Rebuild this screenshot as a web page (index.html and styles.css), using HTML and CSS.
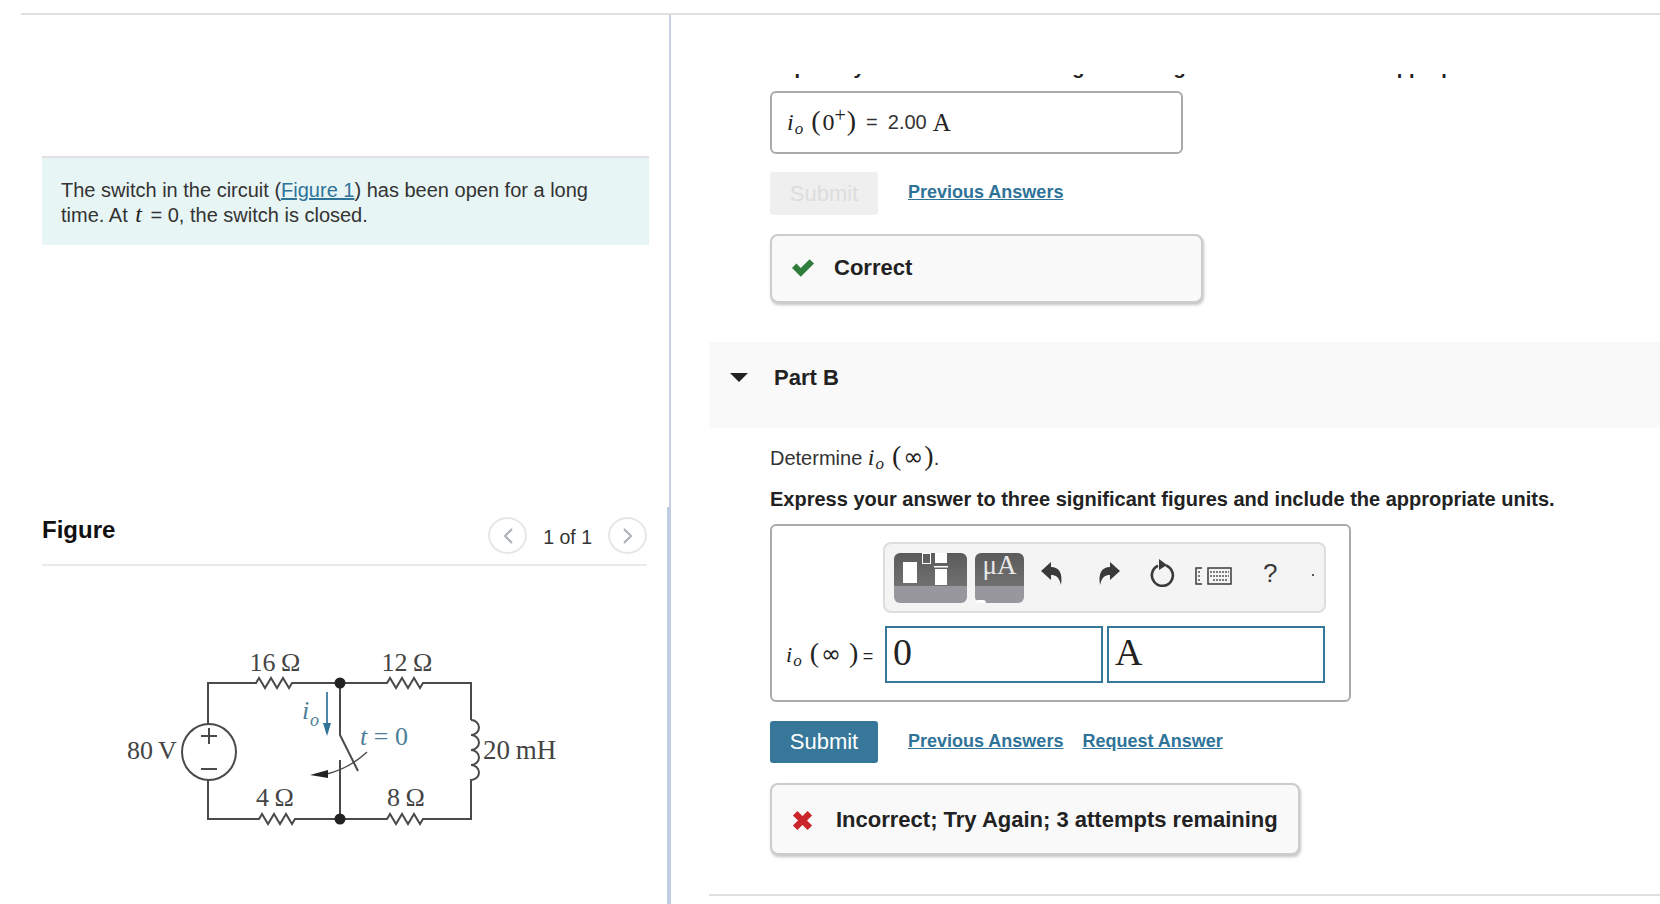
FILE: index.html
```html
<!DOCTYPE html>
<html lang="en">
<head>
  <meta charset="UTF-8" />
  <title>Part B</title>
  <link rel="stylesheet" href="styles.css">
</head>
<body>
<div class="page">
  <div class="top-rule"></div>
  <div class="panes">

    <div class="left">
      <div class="scroll-thumb"></div>
      <div class="intro">
        <div>The switch in the circuit (<a href="#">Figure 1</a>) has been open for a long</div>
        <div>time. At <i class="math">t</i> = 0, the switch is closed.</div>
      </div>

      <div class="fig-head">
        <h2>Figure</h2>
        <div class="pager">
          <button class="pager-btn"><svg width="12" height="18" viewBox="0 0 12 18"><path d="M10 2 L3 9 L10 16" /></svg></button>
          <span class="pager-text">1 of 1</span>
          <button class="pager-btn"><svg width="12" height="18" viewBox="0 0 12 18"><path d="M2 2 L9 9 L2 16" /></svg></button>
        </div>
      </div>

      <!-- viewBox uses page coordinates -->
      <svg class="circuit" width="607" height="338" viewBox="42 566 607 338">
        <g class="wire">
          <path d="M208 724 V683 H256 l3 -5 l6 10 l6 -10 l6 10 l6 -10 l6 10 l3 -5 H387 l3 -5 l6 10 l6 -10 l6 10 l6 -10 l6 10 l3 -5 H471 V720" />
          <path d="M471 720 a8 7.5 0 0 1 0 15 a8 7.5 0 0 1 0 15 a8 7.5 0 0 1 0 15 a8 7.5 0 0 1 0 15 V819 H423 l-3 5 l-6 -10 l-6 10 l-6 -10 l-6 10 l-6 -10 l-3 5 H295 l-3 5 l-6 -10 l-6 10 l-6 -10 l-6 10 l-6 -10 l-3 5 H208 V780" />
          <ellipse cx="209" cy="752" rx="27" ry="28" />
          <path d="M201 736 H217 M209 728 V744 M201 769 H217" />
          <path d="M340 683 V735 L358 771 M340 760 V819" />
          <path class="thin" d="M367 752 Q350 768 327 774" />
        </g>
        <circle class="node" cx="340" cy="683" r="5.5" />
        <circle class="node" cx="340" cy="819" r="5.5" />
        <polygon class="node" points="310,775 328,770 328,778" />
        <path class="io-arrow" d="M327 692 V726" />
        <polygon class="io-head" points="323,723 331,723 327,736" />
        <text class="lbl" x="275" y="671" text-anchor="middle">16 Ω</text>
        <text class="lbl" x="407" y="671" text-anchor="middle">12 Ω</text>
        <text class="lbl" x="275" y="806" text-anchor="middle">4 Ω</text>
        <text class="lbl" x="406" y="806" text-anchor="middle">8 Ω</text>
        <text class="lbl" x="127" y="759">80 V</text>
        <text class="lbl wide" x="483" y="759">20 mH</text>
        <text class="lbl-blue" x="302" y="719" font-style="italic">i</text>
        <text class="lbl-blue small" x="310" y="726" font-style="italic">o</text>
        <text class="lbl-blue" x="360" y="745"><tspan font-style="italic">t</tspan> = 0</text>
      </svg>
    </div>

    <div class="right">
      <div class="part-body">
        <div class="clipped"><p class="strong clipped-line">Express your answer to three significant figures and include the appropriate units.</p></div>

        <div class="answer-done">
          <span class="math"><i>i</i><sub>o</sub><span class="paren">(</span>0<sup>+</sup><span class="paren">)</span></span>
          <span class="eq">=</span>
          <span>2.00</span>
          <span class="math unit">A</span>
        </div>

        <div class="actions">
          <button class="submit disabled">Submit</button>
          <a href="#" class="link">Previous Answers</a>
        </div>

        <div class="feedback correct">
          <svg width="22" height="20" viewBox="0 0 20 18"><path fill="#2e7d3c" d="M0 9 L4 5 L8 9 L16 1 L20 5 L8 17 Z" /></svg>
          <span>Correct</span>
        </div>
      </div>

      <div class="part-head">
        <span class="caret"></span>
        <span class="part-title">Part B</span>
      </div>

      <div class="part-body">
        <p class="question">Determine <span class="math"><i>i</i><sub>o</sub><span class="paren">(</span><span class="inf">∞</span><span class="paren">)</span></span>.</p>
        <p class="strong">Express your answer to three significant figures and include the appropriate units.</p>

        <div class="answer-box">
          <div class="toolbar">
            <div class="tool-btn template">
              <svg width="72" height="33" viewBox="0 0 72 33">
                <rect x="9" y="9" width="14" height="21" fill="#fff" />
                <rect x="28.5" y="0.5" width="8" height="10" fill="none" stroke="#fff" />
                <rect x="41" y="0" width="12" height="10" fill="#fff" />
                <rect x="40" y="13" width="14" height="1.5" fill="#fff" />
                <rect x="41" y="16" width="12" height="16" fill="#fff" />
              </svg>
            </div>
            <div class="tool-btn units"><span>μA</span></div>
            <svg class="ico ico-undo" width="22" height="24" viewBox="0 0 22 24"><path d="M0 9 L10 0 V5 C18 5 22 11 20 23 C18 15 15 13 10 13 V18 Z" /></svg>
            <svg class="ico ico-redo" width="22" height="24" viewBox="0 0 22 24"><path d="M22 9 L12 0 V5 C4 5 0 11 2 23 C4 15 7 13 12 13 V18 Z" /></svg>
            <svg class="ico ico-reset" width="26" height="28" viewBox="0 0 26 28"><path class="ring" d="M16 6.5 A10.5 10.5 0 1 1 8 6.8" /><polygon points="9,0 17,6 9,11" /></svg>
            <svg class="ico ico-keys" width="37" height="18" viewBox="0 0 37 18">
              <path class="key-outline" d="M7 1 H1 V17 H7 M13 1 H36 V17 H13 Z" />
              <path class="key-dots" d="M3 5 H6 M3 9 H6 M3 13 H6 M15 5 H34 M15 9 H34 M18 13 H32" />
            </svg>
            <span class="help">?</span>
            <span class="dot"></span>
          </div>

          <div class="input-row">
            <span class="input-label math"><i>i</i><sub>o</sub><span class="paren">(</span><span class="inf">∞</span><span class="paren">)</span> <span class="eq">=</span></span>
            <div class="field">0</div>
            <div class="field">A</div>
          </div>
        </div>

        <div class="actions second">
          <button class="submit">Submit</button>
          <a href="#" class="link">Previous Answers</a>
          <a href="#" class="link">Request Answer</a>
        </div>

        <div class="feedback incorrect">
          <svg width="21" height="21" viewBox="0 0 20 20"><path d="M3 3 L17 17 M17 3 L3 17" stroke="#c9252b" stroke-width="6" /></svg>
          <span>Incorrect; Try Again; 3 attempts remaining</span>
        </div>
      </div>

      <div class="bottom-rule"></div>
    </div>

  </div>
</div>
</body>
</html>
```

FILE: styles.css
```css
html, body {
  margin: 0;
  padding: 0;
  background: #fff;
  color: #333;
  font-family: "Liberation Sans", Arial, sans-serif;
  font-size: 20px;
}
p { margin: 0; }
a { color: #2f7399; }

.page {
  width: 1660px;
  height: 904px;
  overflow: hidden;
  display: flex;
  flex-direction: column;
}
.top-rule {
  margin: 13px 0 0 21px;
  height: 2px;
  background: #e0e0e0;
}
.panes {
  flex: 1;
  display: flex;
  min-height: 0;
}

/* left column */
.left {
  position: relative;
  box-sizing: border-box;
  width: 671px;
  padding-left: 42px;
  border-right: 2px solid #c3d1e0;
}
.scroll-thumb {
  position: absolute;
  right: -2px;
  top: 492px;
  bottom: 0;
  width: 4px;
  background: #c0cfe0;
}
.intro {
  box-sizing: border-box;
  width: 607px;
  height: 89px;
  margin-top: 141px;
  padding: 20px 19px 0;
  border-top: 2px solid #dfe0e2;
  background: #e8f5f5;
  line-height: 24px;
  color: #333;
}
.fig-head {
  box-sizing: border-box;
  width: 605px;
  height: 51px;
  margin-top: 270px;
  padding-top: 3px;
  display: flex;
  justify-content: space-between;
  align-items: flex-start;
  border-bottom: 2px solid #e8eaec;
  background:
    linear-gradient(#d5d8da, #d5d8da) left bottom / 62px 1px no-repeat,
    linear-gradient(#d5d8da, #d5d8da) right bottom / 63px 1px no-repeat;
  background-origin: border-box;
  background-clip: border-box;
}
.fig-head h2 {
  margin: 0;
  font-size: 24px;
  line-height: 24px;
  color: #111;
}
.pager {
  margin-top: -1px;
  display: flex;
  align-items: center;
  gap: 16px;
}
.pager-btn {
  width: 39px;
  height: 37px;
  padding: 0;
  display: flex;
  align-items: center;
  justify-content: center;
  background: #fff;
  border: 2px solid #e6e6e6;
  border-radius: 50%;
}
.pager-btn path {
  fill: none;
  stroke: #aab0b4;
  stroke-width: 2;
}
.pager-text {
  position: relative;
  top: 2px;
  font-size: 19.5px;
  color: #333;
}

.circuit { display: block; }
.wire { fill: none; stroke: #4a4a4a; stroke-width: 2; }
.wire .thin { stroke-width: 1.3; }
.node { fill: #222; }
.io-arrow { fill: none; stroke: #2f7399; stroke-width: 1.7; }
.io-head { fill: #2f7399; }
.lbl {
  font-family: "Liberation Serif", serif;
  font-size: 26px;
  fill: #444;
  word-spacing: -1px;
}
.lbl.wide { font-size: 27px; }
.lbl-blue {
  font-family: "Liberation Serif", serif;
  font-size: 26px;
  fill: #4d7f99;
}
.lbl-blue.small { font-size: 18px; }

/* right column */
.right {
  flex: 1;
  min-width: 0;
  padding-left: 38px;
}
.part-body { padding-left: 61px; }
.strong { font-weight: bold; color: #222; line-height: 24px; }
.clipped {
  height: 5px;
  margin-top: 59px;
  overflow: hidden;
}
.clipped-line { margin-top: -19px; white-space: nowrap; }

.math { font-family: "Liberation Serif", serif; font-size: 24px; color: #222; }
.intro .math { font-size: 24px; margin: 0 3px 0 2px; }
.math sub, .math sup { line-height: 0; }
.math sub { font-size: 17px; font-style: italic; vertical-align: -4px; margin-left: 1px; }
.math sup { font-size: 20px; vertical-align: 8px; }
.math .paren { font-size: 28px; margin: 0 2px 0 8px; line-height: 0; }
.math .paren:last-child, .math sup + .paren { margin: 0 0 0 1px; }
.inf { font-family: "DejaVu Sans", sans-serif; font-size: 24px; line-height: 0; }
.eq { font-family: "Liberation Sans", sans-serif; font-size: 20px; }

.answer-done {
  box-sizing: border-box;
  width: 413px;
  height: 63px;
  margin-top: 12px;
  padding-left: 15px;
  display: flex;
  align-items: center;
  gap: 10px;
  border: 2px solid #aaa;
  border-radius: 6px;
}
.answer-done .unit { margin-left: -4px; font-size: 25px; }
.actions {
  margin-top: 18px;
  display: flex;
  align-items: center;
  gap: 19px;
}
.submit {
  width: 108px;
  height: 43px;
  margin-right: 11px;
  padding: 0;
  border: none;
  border-radius: 3px;
  background: #37779a;
  color: #fff;
  font-family: "Liberation Sans", sans-serif;
  font-size: 22px;
}
.submit.disabled { background: #efefef; color: #ddd; }
.link {
  font-size: 18px;
  font-weight: bold;
  position: relative;
  top: -1px;
}
.actions.second { margin-top: 19px; }
.actions.second .submit { height: 42px; }

.feedback {
  box-sizing: border-box;
  margin-top: 19px;
  padding-left: 20px;
  display: flex;
  align-items: center;
  border: 2px solid #ccc;
  border-radius: 8px;
  background: #f9f9f9;
  box-shadow: 1px 2px 3px #c4c4c4;
  font-size: 22px;
  font-weight: bold;
  color: #222;
}
.feedback.correct { width: 433px; height: 69px; gap: 20px; padding-bottom: 1px; }
.feedback.incorrect { width: 530px; height: 72px; gap: 23px; margin-top: 20px; padding-top: 2px; }

.part-head {
  box-sizing: border-box;
  height: 86px;
  margin-top: 39px;
  padding-top: 23px;
  display: flex;
  align-items: flex-start;
  background: #f9f9f9;
}
.caret {
  width: 0;
  height: 0;
  margin: 8px 26px 0 21px;
  border-left: 9px solid transparent;
  border-right: 9px solid transparent;
  border-top: 9px solid #222;
}
.part-title {
  font-size: 22px;
  font-weight: bold;
  line-height: 26px;
  color: #222;
}
.question { height: 24px; margin-top: 17px; line-height: 24px; margin-bottom: 18px; }

.answer-box {
  box-sizing: border-box;
  width: 581px;
  height: 178px;
  margin-top: 13px;
  padding-top: 16px;
  border: 2px solid #aaa;
  border-radius: 6px;
}
.toolbar {
  position: relative;
  box-sizing: border-box;
  width: 443px;
  height: 71px;
  margin-left: 111px;
  padding: 9px 0 0 9px;
  display: flex;
  align-items: flex-start;
  border: 2px solid #ddd;
  border-radius: 8px;
  background: #f4f4f4;
}
.tool-btn {
  height: 50px;
  border-radius: 6px;
  background: linear-gradient(#5b5b5b, #707070 66%, #98979e 66%);
}
.template { width: 73px; overflow: hidden; }
.template svg { display: block; }
.units {
  position: relative;
  width: 49px;
  margin-left: 8px;
  text-align: center;
  color: #e8e8e8;
  font-family: "Liberation Serif", serif;
  font-size: 27px;
  line-height: 24px;
}
.units::after {
  content: "";
  position: absolute;
  left: 0;
  bottom: 0;
  width: 11px;
  height: 3px;
  border-radius: 6px 6px 0 0;
  background: #fff;
}
.ico { fill: #3a3a3a; }
.ico-undo { margin: 9px 0 0 17px; }
.ico-redo { margin: 9px 0 0 35px; }
.ico-reset { margin: 6px 0 0 30px; }
.ring { fill: none; stroke: #3a3a3a; stroke-width: 2.6; }
.ico-keys { margin: 14px 0 0 19px; fill: none; }
.key-outline { fill: none; stroke: #3a3a3a; stroke-width: 1.5; }
.key-dots { fill: none; stroke: #555; stroke-width: 1.5; stroke-dasharray: 2 1; }
.help {
  margin: 5px 0 0 31px;
  font-size: 26px;
  line-height: 30px;
  color: #3a3a3a;
}
.dot {
  width: 2px;
  height: 2px;
  margin: 21px 0 0 35px;
  background: #555;
}
.input-row {
  height: 57px;
  margin-top: 13px;
  padding-left: 14px;
  display: flex;
  align-items: center;
}
.input-label {
  width: 99px;
  flex-shrink: 0;
  font-size: 22px;
}
.input-label .eq { font-size: 18px; margin-left: -3px; }
.field {
  box-sizing: border-box;
  width: 218px;
  height: 57px;
  margin-right: 4px;
  padding-left: 6px;
  border: 2px solid #37779a;
  font-family: "Liberation Serif", serif;
  font-size: 38px;
  line-height: 49px;
  color: #222;
}
.bottom-rule {
  height: 2px;
  margin-top: 39px;
  background: #e0e0e0;
}
```
